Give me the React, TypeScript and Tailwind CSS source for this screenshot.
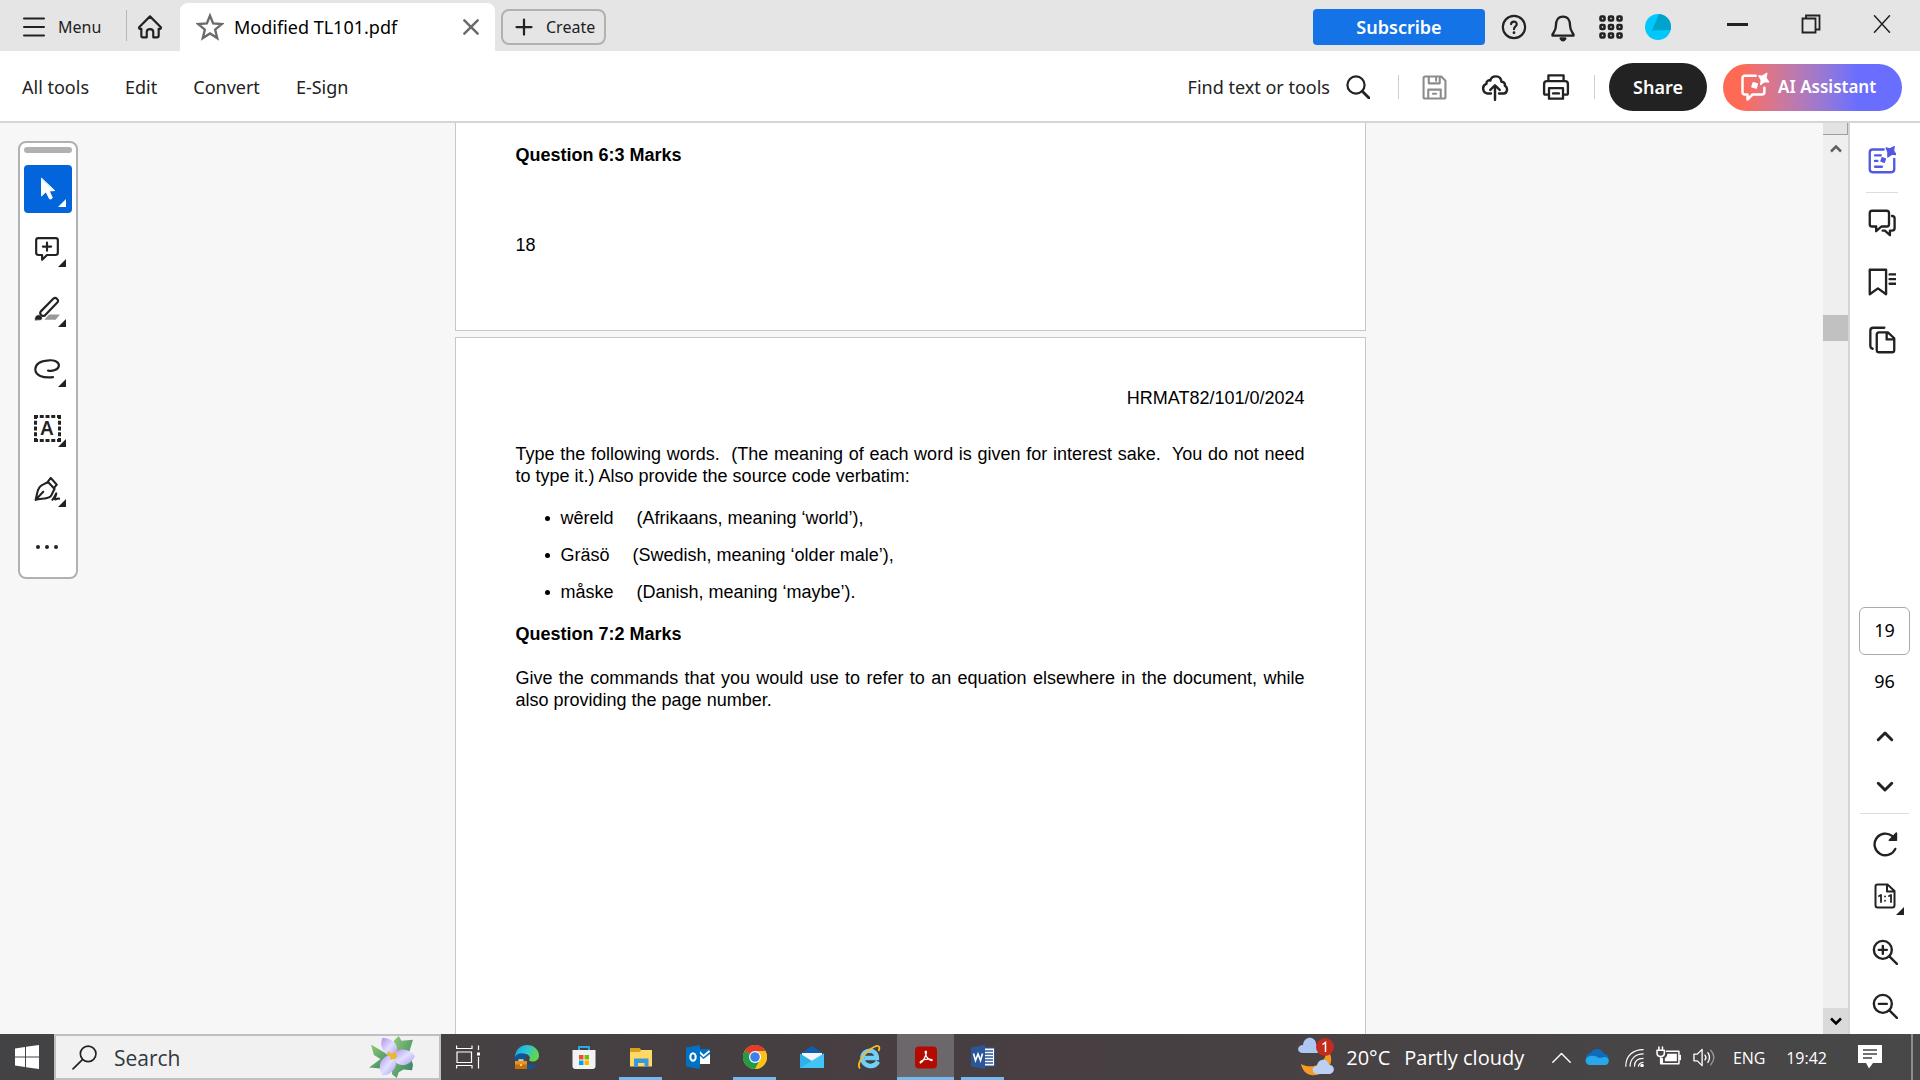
import React from "react";

type P = { children?: React.ReactNode; className?: string; box?: string; w?: number };

/* Outline icon on a 24 unit grid. */
function Ico({ children, className = "size-6", box = "0 0 24 24", w = 2 }: P) {
  return (
    <svg
      viewBox={box}
      className={"shrink-0 " + className}
      fill="none"
      stroke="currentColor"
      strokeWidth={w}
      strokeLinecap="round"
      strokeLinejoin="round"
      aria-hidden="true"
    >
      {children}
    </svg>
  );
}

function Corner({ className = "" }: { className?: string }) {
  return (
    <svg viewBox="0 0 8 8" className={"absolute size-2 fill-current " + className} aria-hidden="true">
      <path d="M8 0V8H0Z" />
    </svg>
  );
}

function Sparkle({ d }: { d: string }) {
  return <path d={d} fill="currentColor" strokeWidth="1" />;
}

function TitleBar() {
  return (
    <header className="flex h-[51px] shrink-0 items-stretch bg-[#e5e5e5] text-[#222]">
      <button className="flex w-[126px] items-center gap-3 pl-[22px] pt-[3px] text-[16px]">
        <Ico className="size-6" w={2}>
          <path d="M2 3.5H22M2 12H22M2 20.5H22" />
        </Ico>
        Menu
      </button>
      <div className="my-[10px] w-px bg-[#b5b5b5]" />
      <button aria-label="Home" className="flex w-[53px] items-center justify-center pr-2 pt-[2px]">
        <Ico className="size-[26px]">
          <path d="M12 2.2 22 12.2C22.400 12.800 22 13.700 21.200 13.700H20V20Q20 21.500 18.500 21.500H15V16.500Q15 14 12 14T9 16.500V21.500H5.500Q4 21.500 4 20V13.700H2.800C2 13.700 1.600 12.800 2 12.200Z" />
        </Ico>
      </button>
      <div className="mt-[3px] flex w-[315px] items-center rounded-t-lg bg-white pl-4 pr-[14px] text-black">
        <button aria-label="Star file" className="text-[#6b6b6b]">
          <Ico className="size-7" w={2}>
            <path d="M12 2.200 14.700 8.900 22 9.500 16.400 14.200 18.200 21.500 12 17.500 5.800 21.500 7.600 14.200 2 9.500 9.300 8.900Z" strokeLinejoin="miter" />
          </Ico>
        </button>
        <span className="ml-[10px] grow pt-px text-[18px] whitespace-nowrap">Modified TL101.pdf</span>
        <button aria-label="Close tab" className="text-[#6b6b6b]">
          <Ico className="size-5" w={3}>
            <path d="M4 4 20 20M20 4 4 20" />
          </Ico>
        </button>
      </div>
      <button className="ml-[6px] mt-[9px] flex h-9 w-[105px] items-center gap-[13px] rounded-lg border-2 border-[#b1b1b1] pl-3 text-[16px]">
        <Ico className="size-[18px]" w={3}>
          <path d="M12 2V22M2 12H22" />
        </Ico>
        Create
      </button>
      <div className="grow" />
      <button className="mt-[9px] h-9 w-[172px] rounded bg-[#1473e6] text-[18px] font-semibold text-white">Subscribe</button>
      <button aria-label="Help" className="flex w-[58px] items-center justify-center pt-[2px]">
        <Ico className="size-[26px]" w={2}>
          <circle cx="12" cy="12" r="10.300" />
          <path d="M9.300 9.400C9.500 6.200 14.600 6.200 14.500 9.400C14.500 11.500 12 11.400 12 14" />
          <path d="M12 17.200V17.300" strokeWidth="2.600" />
        </Ico>
      </button>
      <button aria-label="Notifications" className="flex w-10 items-center justify-center pt-1">
        <Ico className="size-7" w={2}>
          <path d="M12 2.200C7.500 2.200 6 6 6 9.500C6 14 4.500 15 3 17.500V18.500H21V17.500C19.500 15 18 14 18 9.500C18 6 16.500 2.200 12 2.200Z" />
          <path d="M10 21Q12 24 14 21Z" fill="currentColor" />
        </Ico>
      </button>
      <button aria-label="Apps" className="flex w-14 items-center justify-center pt-[3px]">
        <Ico className="size-6" w={2.6}>
          {[3.5, 12, 20.5].map((y) =>
            [3.5, 12, 20.5].map((x) => <rect key={x + "-" + y} x={x - 2} y={y - 2} width="4" height="4" rx="1" />)
          )}
        </Ico>
      </button>
      <button aria-label="Account" className="flex w-[38px] items-center justify-center pt-[2px]">
        <svg viewBox="0 0 26 26" className="size-[26px]" aria-hidden="true">
          <circle cx="13" cy="13" r="13" fill="#00c8fa" />
          <path d="M14 0A13 13 0 0 1 25.600 16L7 16.500Z" fill="#00a3cc" />
        </svg>
      </button>
      <button aria-label="Minimize" className="ml-3 flex w-[72px] items-center justify-center">
        <span className="mb-[3px] ml-6 h-[3px] w-[21px] bg-[#222]" />
      </button>
      <button aria-label="Restore" className="flex w-[76px] items-center justify-center pb-[3px] pl-[24px]">
        <Ico className="size-5" w={1.8} box="0 0 20 20">
          <path d="M1.500 4.500H14.500V18.500H1.500ZM5 4V1.500H18.500V15.500H15" strokeLinejoin="miter" />
        </Ico>
      </button>
      <button aria-label="Close" className="flex w-[83px] items-center justify-center pb-[3px] pl-[7px]">
        <Ico className="size-[18px]" w={2}>
          <path d="M2 1 22 23M22 1 2 23" />
        </Ico>
      </button>
    </header>
  );
}

function ToolBar() {
  return (
    <div className="flex h-[72px] shrink-0 items-center border-b-2 border-[#d5d5d5] bg-white pt-[2px] text-[18px] text-[#222]">
      <nav className="flex grow gap-9 pl-[22px]">
        <button>All tools</button>
        <button>Edit</button>
        <button>Convert</button>
        <button>E-Sign</button>
      </nav>
      <button className="flex items-center gap-4">
        Find text or tools
        <Ico className="size-6" w={2.2}>
          <circle cx="10" cy="10" r="8.600" />
          <path d="M16.500 16.500 23 23" strokeWidth="2.800" />
        </Ico>
      </button>
      <div className="ml-7 h-6 w-px bg-[#cfcfcf]" />
      <button aria-label="Save" className="ml-[23px] text-[#8c8c8c]">
        <Ico className="size-[25px]" w={2}>
          <path d="M3 1.500H18.500L22.500 5.500V21Q22.500 22.500 21 22.500H3Q1.500 22.500 1.500 21V3Q1.500 1.500 3 1.500ZM6.500 2V8H17V2M13.500 3V5.500M6 22V14H18V22M10.500 18H13.500" />
        </Ico>
      </button>
      <button aria-label="Upload to cloud" className="ml-[34px]">
        <Ico className="size-7" w={2.1}>
          <path d="M8.500 17.500H5.500A4.200 4.200 0 0 1 4.600 9.400C4.500 6.500 7 6 8 6.500C9 1.800 17 1.300 17.500 7.500C20 7.300 20.800 9.500 20.400 10.800C23.500 12.500 22.500 17.500 19.500 17.500H15.500M12 23V11M8 14.500 12 10.500 16 14.500" />
        </Ico>
      </button>
      <button aria-label="Print" className="ml-[33px]">
        <Ico className="size-7" w={2}>
          <path d="M5.500 6.500V2H18.500V6.500M5 18.500H3Q1.800 18.500 1.800 17.300V9.500Q1.800 7 4.200 7H19.800Q22.200 7 22.200 9.500V17.300Q22.200 18.500 21 18.500H19M6 13H18V22H6ZM9.500 17.500H14.500" />
        </Ico>
      </button>
      <div className="ml-6 h-6 w-px bg-[#cfcfcf]" />
      <button className="ml-[14px] h-12 w-[98px] rounded-full bg-[#222] font-semibold text-white">Share</button>
      <button className="ml-4 mr-[18px] flex h-[47px] w-[179px] items-center gap-2 rounded-full bg-linear-to-r from-[#ff6a55] from-10% to-[#696eff] to-75% pl-[17px] font-semibold text-white">
        <Ico className="size-[30px]" w={2}>
          <path d="M12.500 3H4Q2 3 2 5V16Q2 18 4 18H6V22L10 18H17.500Q19.500 18 19.500 16V12.500" />
          <Sparkle d="M15 3 18 3.300 21.500 1 20.800 4.800 23 8 19.500 7.800 16.500 10 17 6.300Z" />
          <Sparkle d="M10.500 8.500 14 9.500 13 13 9.500 12Z" />
        </Ico>
        <span className="text-[17px] whitespace-nowrap">AI Assistant</span>
      </button>
    </div>
  );
}

const tools: { name: string; icon: React.ReactNode }[] = [
  {
    name: "Add comment",
    icon: (
      <Ico className="size-[26px]">
        <path d="M4 2H20Q22 2 22 4V15.500Q22 17.500 20 17.500H12L7.500 22V17.500H4Q2 17.500 2 15.500V4Q2 2 4 2ZM12 6V13.500M8.200 9.800H15.800" />
      </Ico>
    ),
  },
  {
    name: "Highlight",
    icon: (
      <Ico className="size-[26px]">
        <path d="M14 17H24L20 22H9.500Z" fill="#999" stroke="none" />
        <path d="M6.300 14.200 18 2.300Q19.500 1 21.300 2.700T21.500 6L10 18Q8 19 6.500 17.500T6.300 14.200Z" />
        <path d="M1 22C1 18.500 3 17.500 5 18C8 19 8 22 5.500 22Z" fill="currentColor" strokeWidth="0.500" />
      </Ico>
    ),
  },
  {
    name: "Draw",
    icon: (
      <Ico className="size-[26px]">
        <path d="M13 13.500C17 14.500 22.500 12.500 23 9C23.200 5 18 3.500 13.500 4C7 4.500 1.500 7 1.200 12C1 18 8 20.500 17.500 19.500" />
      </Ico>
    ),
  },
  {
    name: "Text box",
    icon: (
      <span className="relative flex size-[27px] items-center justify-center">
        <svg viewBox="0 0 27 27" className="absolute inset-0 size-full" fill="none" stroke="currentColor" strokeWidth="3" aria-hidden="true">
          <path d="M0 1.500H27M0 25.500H27M1.500 0V27M25.500 0V27" strokeDasharray="4 1.750" />
        </svg>
        <span className="relative text-[19px] leading-none font-semibold">A</span>
      </span>
    ),
  },
  {
    name: "Sign",
    icon: (
      <Ico className="size-[26px]" w={1.9}>
        <path d="M1.500 22C3 17 2.500 14 5 10.500C7 8 10 7.500 13 5.500L19 12C17 14.500 17 17.500 15 19C11.500 21.500 6 20.500 1.500 22L8.500 14.500M13 5 15.500 1.800 21 8 18.500 11M17 22C19 20 19.500 17.500 20.500 16C21 17 18.500 21 19.500 21.500C20.500 22 21.500 20 23.500 21" />
      </Ico>
    ),
  },
];

function ToolPalette() {
  return (
    <aside
      aria-label="Tools"
      className="absolute left-[18px] top-[18px] flex w-[60px] flex-col items-center gap-3 rounded-lg border-2 border-[#b1b1b1] bg-white p-1 text-[#222]"
    >
      <div className="h-[6px] w-12 rounded-full bg-[#b1b1b1]" />
      <button aria-label="Select" className="relative flex size-12 items-center justify-center rounded bg-[#0265dc] text-white">
        <Ico className="size-6" w={1}>
          <path d="M5.500 1.500V19L10 14.800L13.500 21.800Q15.500 22.500 16.300 20.800L13.200 14L18.300 13.600Z" fill="currentColor" />
        </Ico>
        <Corner className="bottom-[6px] right-[6px]" />
      </button>
      {tools.map((t) => (
        <button key={t.name} aria-label={t.name} className="relative flex size-12 items-center justify-center pb-px pr-[2px]">
          {t.icon}
          <Corner className="bottom-[6px] right-[6px]" />
        </button>
      ))}
      <button aria-label="More tools" className="flex h-12 w-12 items-center justify-center gap-[5px] pb-1 pr-[2px]">
        <i className="size-1 rounded-full bg-[#222]" />
        <i className="size-1 rounded-full bg-[#222]" />
        <i className="size-1 rounded-full bg-[#222]" />
      </button>
    </aside>
  );
}

const words = [
  { word: "wêreld", note: "(Afrikaans, meaning ‘world’)," },
  { word: "Gräsö", note: "(Swedish, meaning ‘older male’)," },
  { word: "måske", note: "(Danish, meaning ‘maybe’)." },
];

function Doc() {
  return (
    <main className="flex min-w-0 grow flex-col items-center gap-[6px] overflow-hidden pr-[3px] font-['Liberation_Sans',sans-serif] text-[18px] leading-[22px] text-black">
      <section className="w-full max-w-[911px] shrink-0 border border-t-0 border-[#c8c8c8] bg-white px-[60px] pb-[74px] pt-[21px]">
        <h2 className="font-bold">Question 6:3 Marks</h2>
        <p className="pt-[68px]">18</p>
      </section>
      <section className="w-full max-w-[911px] grow border border-b-0 border-[#c8c8c8] bg-white px-[60px] pt-[49px]">
        <p className="text-right">HRMAT82/101/0/2024</p>
        <p className="mt-[34px] text-justify">
          Type the following words.&nbsp; (The meaning of each word is given for interest sake.&nbsp; You do not need to
          type it.) Also provide the source code verbatim:
        </p>
        <ul className="mt-5 flex flex-col gap-[15px] pl-[29px]">
          {words.map((w) => (
            <li key={w.word} className="flex items-center">
              <i className="mr-[11px] size-[5px] rounded-full bg-black" />
              <span className="mr-[23px]">{w.word}</span>
              <span>{w.note}</span>
            </li>
          ))}
        </ul>
        <h2 className="mt-5 font-bold">Question 7:2 Marks</h2>
        <p className="mt-[22px] text-justify">
          Give the commands that you would use to refer to an equation elsewhere in the document, while also providing
          the page number.
        </p>
      </section>
    </main>
  );
}

function ScrollBar() {
  return (
    <div className="flex w-[25px] shrink-0 flex-col bg-[#efefef]" aria-hidden="true">
      <div className="h-3 border-b border-r border-[#a0a0a0] bg-[#e3e3e3]" />
      <div className="flex h-7 items-center justify-center text-[#606060]">
        <Ico className="size-3" w={5}>
          <path d="M2 17 12 7 22 17" strokeLinecap="butt" strokeLinejoin="miter" />
        </Ico>
      </div>
      <div className="mt-[152px] h-[26px] bg-[#c1c1c1]" />
      <div className="grow" />
      <div className="flex h-[26px] items-center justify-center bg-[#dadada] text-black">
        <Ico className="size-3" w={5}>
          <path d="M2 7 12 17 22 7" strokeLinecap="butt" strokeLinejoin="miter" />
        </Ico>
      </div>
    </div>
  );
}

function Rail() {
  return (
    <aside className="flex w-[72px] shrink-0 flex-col justify-between border-l-2 border-[#d5d5d5] bg-white text-[#222]">
      <div className="flex flex-col items-center pr-[6px] pt-[23px]">
        <button aria-label="AI summary" className="text-[#5258e4]">
          <Ico className="size-7" w={2}>
            <path d="M13.500 3H4Q1.500 3 1.500 5.500V20Q1.500 22.500 4 22.500H20Q22.500 22.500 22.500 20V11M6 8H11M6 12.800H8M6 17.800H12" />
            <Sparkle d="M15.500 1.500 18.500 2.500 22.500 .500 22 4 24 7.500 20.500 7 17 9.500 17 5.500Z" />
            <Sparkle d="M12 10 15 11 14 14 11 13Z" />
          </Ico>
        </button>
        <div className="mb-[16px] mt-[18px] h-px w-8 bg-[#dcdcdc]" />
        <button aria-label="Comments">
          <Ico className="size-7" w={2}>
            <path d="M3.500 1.500H16Q18 1.500 18 3.500V13Q18 15 16 15H11.500L7 19V15H3.500Q1.500 15 1.500 13V3.500Q1.500 1.500 3.500 1.500ZM20.500 6Q22.800 6 22.800 8V16.500Q22.800 18.500 20.500 18.500H18.800V22.500L14.500 18.500H12.500" />
          </Ico>
        </button>
        <button aria-label="Bookmarks" className="mt-[31px]">
          <Ico className="size-7" w={2}>
            <path d="M1.500 1.500H15.500V22.500L8.500 17.500 1.500 22.500ZM18.500 5.500H24M18.500 9.500H24M18.500 13.500H24" />
          </Ico>
        </button>
        <button aria-label="Pages" className="mt-[30px]">
          <Ico className="size-7" w={2}>
            <path d="M14 1.500H4.500Q2 1.500 2 4V17Q2 19 4 19.500M9.500 5.500H17L22.500 10.500V20.500Q22.500 22.500 20.500 22.500H9.500Q7.500 22.500 7.500 20.500V7.500Q7.500 5.500 9.500 5.500ZM16 6V11.500H22" />
          </Ico>
        </button>
      </div>
      <div className="flex flex-col items-center pb-[15px] pr-px text-[18px]">
        <input
          aria-label="Current page"
          defaultValue="19"
          className="h-12 w-[51px] rounded-md border border-[#aaa] pb-[2px] text-center text-black outline-none"
        />
        <span className="mt-[14px] leading-[24px] text-black">96</span>
        <button aria-label="Previous page" className="mt-[34px]">
          <Ico className="size-[18px]" w={4}>
            <path d="M3 17 12 8 21 17" />
          </Ico>
        </button>
        <button aria-label="Next page" className="mt-[33px]">
          <Ico className="size-[18px]" w={4}>
            <path d="M3 7 12 16 21 7" />
          </Ico>
        </button>
        <div className="mt-[17px] h-px w-[49px] bg-[#dcdcdc]" />
        <button aria-label="Rotate" className="mt-[17px]">
          <Ico className="size-[26px]" w={2.2}>
            <path d="M21.500 16.500A10 10 0 1 1 18.500 4.500L20.500 7" />
            <path d="M22.500 2V8.500H16Z" fill="currentColor" strokeWidth="1.500" />
          </Ico>
        </button>
        <button aria-label="Actual size" className="relative mt-[26px] flex h-[26px] w-[39px] items-center justify-center">
          <Ico className="h-[26px] w-[22px]" box="0 0 22 26" w={2}>
            <path d="M3.500 1.500H13.500L20.500 8V22Q20.500 24.500 18.500 24.500H3.500Q1.500 24.500 1.500 22V3.500Q1.500 1.500 3.500 1.500ZM13 2V8.500H20" />
            <path d="M5 13 7 12V19M15 13 17 12V19M11 13.500V13.600M11 17.700V17.800" strokeWidth="1.800" />
          </Ico>
          <Corner className="-bottom-[6px] right-0" />
        </button>
        <button aria-label="Zoom in" className="mt-[30px]">
          <Ico className="size-[26px]" w={2.2}>
            <circle cx="10" cy="10" r="8.300" />
            <path d="M16.500 16.500 23 23M10 6.300V13.700M6.300 10H13.700" />
          </Ico>
        </button>
        <button aria-label="Zoom out" className="mt-[28px]">
          <Ico className="size-[26px]" w={2.2}>
            <circle cx="10" cy="10" r="8.300" />
            <path d="M16.500 16.500 23 23M6.300 10H13.700" />
          </Ico>
        </button>
      </div>
    </aside>
  );
}

function Flower() {
  return (
    <svg viewBox="0 0 48 44" className="h-[42px] w-12" aria-hidden="true">
      <defs>
        <linearGradient id="leaf" x1="0" y1="0" x2="1" y2="1">
          <stop offset="0" stopColor="#97cc74" />
          <stop offset="1" stopColor="#2e7f66" />
        </linearGradient>
        <linearGradient id="petal" x1="0" y1="0" x2="1" y2="1">
          <stop offset="0" stopColor="#b98df0" />
          <stop offset="0.500" stopColor="#dfe2ff" />
          <stop offset="1" stopColor="#b18ff5" />
        </linearGradient>
      </defs>
      <g fill="url(#leaf)">
        <path d="M24 22 26 5 31 0 34 5 46 4 42 17 46 30 45 36 36 35 31 38 29 44 24 40Z" />
        <path d="M24 22 2 9 5 20 12 24 0 33 12 34 22 30Z" />
      </g>
      <path d="M25 22C13 19 11 8 14 2C25 2 33 10 28 20Z" fill="url(#petal)" />
      <path d="M25 21C29 12 41 12 48 21C43 32 31 34 25 24Z" fill="url(#petal)" />
      <path d="M26 22C33 30 23 42 14 41C8 32 12 23 21 20Z" fill="url(#petal)" />
      <path d="M20 16 24 19 28 15 28 20 30 21 27 24 22 25 22 21 18 20Z" fill="#e9b92c" />
    </svg>
  );
}

function Slot({ label, active, run, children }: { label: string; active?: boolean; run?: boolean; children: React.ReactNode }) {
  return (
    <button
      aria-label={label}
      className={"relative flex h-full w-[57px] shrink-0 items-center justify-center " + (active ? "bg-[#6c676b]" : "")}
    >
      {children}
      {run && <span className={"absolute bottom-0 h-[3px] bg-[#76b9ed] " + (active ? "inset-x-0" : "inset-x-[7px]")} />}
    </button>
  );
}

function Pic({ children }: { children: React.ReactNode }) {
  return (
    <svg viewBox="0 0 24 24" className="size-6" aria-hidden="true">
      {children}
    </svg>
  );
}

function TaskBar() {
  return (
    <footer className="flex h-[46px] shrink-0 items-stretch bg-linear-to-r from-[#434345] via-[#473e41] via-50% to-[#484848] text-white">
      <button aria-label="Start" className="flex w-[54px] items-center justify-center">
        <Pic>
          <path d="M0 3.400 10 2V11.500H0ZM11 1.800 24 0V11.500H11ZM0 12.500H10V22L0 20.600ZM11 12.500H24V24L11 22.200Z" fill="#fff" />
        </Pic>
      </button>
      <label className="flex w-[387px] items-center border-2 border-[#c0c0c0] bg-[#f1f1f1] pl-4 pr-[23px] text-[#222]">
        <Ico className="size-[25px]" w={1.6}>
          <circle cx="15.500" cy="8.500" r="7.500" />
          <path d="M10 14 1 23" />
        </Ico>
        <input
          aria-label="Search"
          placeholder="Search"
          className="ml-[17px] w-0 min-w-0 grow bg-transparent pt-[3px] font-['Open_Sans','Noto_Sans',sans-serif] text-[21px] outline-none placeholder:text-[#303840]"
        />
        <Flower />
      </label>
      <Slot label="Task view">
        <Ico className="mr-1 size-6" w={1.200}>
          <path d="M.600 .500V3.500H16V.500M1 7H15.500V17.500H1ZM.600 23.500V20.500H16V23.500M22.500 .500V5M22.500 12V23.500" strokeLinecap="butt" strokeLinejoin="miter" />
          <path d="M21 7.500H24V10.500H21Z" fill="currentColor" stroke="none" />
        </Ico>
      </Slot>
      <Slot label="Edge">
        <Pic>
          <defs>
            <linearGradient id="edge" x1="0" y1="0" x2="1" y2="0.400">
              <stop offset="0" stopColor="#1b9de2" />
              <stop offset="0.500" stopColor="#2cc3d8" />
              <stop offset="1" stopColor="#62d64c" />
            </linearGradient>
          </defs>
          <path d="M0 13C0 4 6 0 12 0C19 0 24 5 24 10.500C24 15 20 17 16.500 16.500C14 16 13.500 15 15 13C14 8 6 7 0 13Z" fill="url(#edge)" />
          <path d="M0 12C3 7 9 8 12 10C9 13 10 19 16 20C19 20.500 21 19.500 22.500 18.500C20 23 15 25 10 24C4 23 0 18 0 12Z" fill="#0d53a0" />
          <path d="M0 16H12V24H0Z" fill="#c46f0c" />
          <path d="M0 16H12V19.500H0Z" fill="#e59323" />
          <path d="M3.500 16V14.300H8.500V16M5 19H7V21H5Z" fill="#ffd166" />
        </Pic>
      </Slot>
      <Slot label="Microsoft Store">
        <Pic>
          <path d="M7 6V2H17V6" fill="none" stroke="#2aa8e0" strokeWidth="2" />
          <path d="M.500 5H23.500V21Q23.500 24 20.500 24H3.500Q.500 24 .500 21Z" fill="#f1f3f5" />
          <path d="M7 10H11.500V14.500H7Z" fill="#f25022" />
          <path d="M12.500 10H17V14.500H12.500Z" fill="#7fba00" />
          <path d="M7 15.500H11.500V20H7Z" fill="#00a4ef" />
          <path d="M12.500 15.500H17V20H12.500Z" fill="#ffb900" />
        </Pic>
      </Slot>
      <Slot label="File Explorer" run>
        <Pic>
          <path d="M1 3H10.500L12.500 5H23V9H1Z" fill="#d9a01d" />
          <path d="M1 7H10.500L12.500 5H23V21.500H1Z" fill="#ffd965" />
          <path d="M5 13.500H19.500V22H15.500V18H9V22H5Z" fill="#3a96dd" />
        </Pic>
      </Slot>
      <Slot label="Outlook">
        <Pic>
          <path d="M12 4.500H24V19H12Z" fill="#fff" />
          <path d="M12 4H24V9L17.500 14 12 9Z" fill="#0072c6" />
          <path d="M13 6.500 17.500 11 23.500 6" fill="none" stroke="#fff" strokeWidth="1.800" />
          <path d="M0 2.500 14 0V24L0 21.500Z" fill="#0072c6" />
          <ellipse cx="7" cy="12" rx="2.700" ry="3.800" fill="none" stroke="#fff" strokeWidth="2" />
        </Pic>
      </Slot>
      <Slot label="Chrome" run>
        <Pic>
          <circle cx="12" cy="12" r="12" fill="#fbc116" />
          <path d="M12 12 1.600 6A12 12 0 0 1 22.400 6Z" fill="#e33b2e" />
          <path d="M12 12 1.600 6A12 12 0 0 0 12 24L17 15Z" fill="#229a48" />
          <path d="M12 6H22.400A12 12 0 0 1 12 24L17.200 15Z" fill="#fbc116" />
          <circle cx="12" cy="12" r="6" fill="#fff" />
          <circle cx="12" cy="12" r="4.800" fill="#3d7ff0" />
        </Pic>
      </Slot>
      <Slot label="Mail">
        <Pic>
          <path d="M0 9 12 1 24 9Z" fill="#0f5fae" />
          <path d="M2 8H22V18H2Z" fill="#f4f6f8" />
          <path d="M0 8.500 12 16 24 8.500V23H0Z" fill="#2fb0ea" />
          <path d="M0 23 24 8.500V23Z" fill="#42c4f5" />
        </Pic>
      </Slot>
      <Slot label="Internet Explorer">
        <Pic>
          <path d="M21 16.500C17 23.500 5.500 22 5.500 13C5.500 3.500 19.500 3 19.800 13H8" fill="none" stroke="#6fd0f8" strokeWidth="4.600" />
          <path d="M3 23.500C-1 19 7 7 17 2C22 -.500 23.500 2 21.500 6" fill="none" stroke="#f5bd24" strokeWidth="1.800" />
        </Pic>
      </Slot>
      <Slot label="Acrobat" active run>
        <Pic>
          <rect x="1" y="1.500" width="22" height="22" rx="4" fill="#b30b00" />
          <path d="M6.500 18C9 17 12 11 12.500 7C12 5.500 10.800 6 11.300 8C12 12 15 15.500 18 15.500C19 14 13 13.500 9 15C6 16.200 5.800 17.500 6.500 18Z" fill="none" stroke="#fff" strokeWidth="1.300" />
        </Pic>
      </Slot>
      <Slot label="Word" run>
        <Pic>
          <path d="M12 3H23.500V21H12Z" fill="#fff" stroke="#2b579a" />
          <path d="M14 6H22M14 9H22M14 12H22M14 15H22M14 18H22" stroke="#2b579a" strokeWidth="1.300" />
          <path d="M0 2.500 14 0V24L0 21.500Z" fill="#2b579a" />
          <path d="M2.500 8.500 4.500 15.500 7 9 9.500 15.500 11.500 8.500" fill="none" stroke="#fff" strokeWidth="1.600" />
        </Pic>
      </Slot>
      <div className="grow" />
      <button className="flex items-center font-['Open_Sans','Noto_Sans',sans-serif] text-[20px] whitespace-nowrap">
        <svg viewBox="0 0 36 40" className="mb-[3px] h-10 w-9" aria-hidden="true">
          <path d="M32 18C37 29 26 41 13 39C8 38 4 34 3 28C14 34 27 28 28 17Z" fill="#f49a25" />
          <path d="M5 17C-2 17-1 9 5 9C6-1 18 0 18 8C25 8 24 17 18 17Z" fill="#aec6f2" />
          <path d="M20 38C13 38 13 30 19 30C20 22 30 22 31 29C38 29 37 38 31 38Z" fill="#bcd0f5" />
          <circle cx="27" cy="11" r="9" fill="#c42b1c" />
          <path d="M24.500 8.500 27.500 6.500V16" fill="none" stroke="#fff" strokeWidth="1.500" />
        </svg>
        <span className="ml-3 pt-[2px]">20°C</span>
        <span className="ml-[14px] pt-[2px]">Partly cloudy</span>
      </button>
      <button aria-label="Show hidden icons" className="ml-7">
        <Ico className="size-[19px]" w={1.800}>
          <path d="M1 18 12 7 23 18" />
        </Ico>
      </button>
      <button aria-label="OneDrive" className="ml-[14px]">
        <svg viewBox="0 0 24 24" className="size-6" aria-hidden="true">
          <path d="M1 15C0 10 4 8 6 8C9 2 17 3 19 9C24 9 25 16 22 18L4 19Z" fill="#0f6cbd" />
          <path d="M5 20C-1 20-1 11 6 11C9 10 12 12 14 13L20 12C25 12 25 20 20 20Z" fill="#28a8ea" />
        </svg>
      </button>
      <button aria-label="Network" className="ml-4">
        <Ico className="size-[19px]" w={1.500}>
          <path d="M1 23C1 10 10 2 23 2" />
          <path d="M6.500 23C6.500 14 13 7.500 23 7.500M12 23C12 17 16 13 23 13M17 23Q17.500 19 23 18" />
          <circle cx="21.500" cy="22" r="1.500" fill="currentColor" />
        </Ico>
      </button>
      <button aria-label="Battery" className="ml-3">
        <Ico className="size-[25px]" w={1.500}>
          <path d="M10 6H22V18H6V13M23.500 10V14M1 5H8V8Q8 11 4.500 11T1 8ZM2.800 5V2M6.200 5V2M4.500 11V18H6" />
          <path d="M11 8.500H20V15.500H8.500V13Q11 11 11 8.500Z" fill="currentColor" stroke="none" />
        </Ico>
      </button>
      <button aria-label="Volume" className="ml-3">
        <Ico className="size-[23px]" w={1.400}>
          <path d="M1 8.500H4.500L9.500 3.500V20.500L4.500 15.500H1ZM12.500 9.500Q14.500 12 12.500 14.500M15.500 7Q19 12 15.500 17" />
          <path d="M18.500 4.500Q25 12 18.500 19.500" stroke="#999" />
        </Ico>
      </button>
      <button className="ml-4 w-[34px] pt-px font-['Open_Sans','Noto_Sans',sans-serif] text-[16px]">ENG</button>
      <button className="ml-5 pt-px font-['Open_Sans','Noto_Sans',sans-serif] text-[16px]">19:42</button>
      <button aria-label="Notification centre" className="ml-[31px]">
        <Pic>
          <path d="M0 0H24V18H15L11 23.500 8 18H0Z" fill="#fff" />
          <path d="M5 5H19M5 9H19M5 13H14" stroke="#444" strokeWidth="1.300" />
        </Pic>
      </button>
      <div className="ml-[29px] mr-[7px] w-[2px] bg-[#8c8c8c]" />
    </footer>
  );
}

export default function App() {
  return (
    <div className="flex h-screen flex-col overflow-hidden bg-[#f7f7f7] font-['Noto_Sans',sans-serif]">
      <TitleBar />
      <ToolBar />
      <div className="relative flex min-h-0 grow">
        <Doc />
        <ScrollBar />
        <Rail />
        <ToolPalette />
      </div>
      <TaskBar />
    </div>
  );
}
